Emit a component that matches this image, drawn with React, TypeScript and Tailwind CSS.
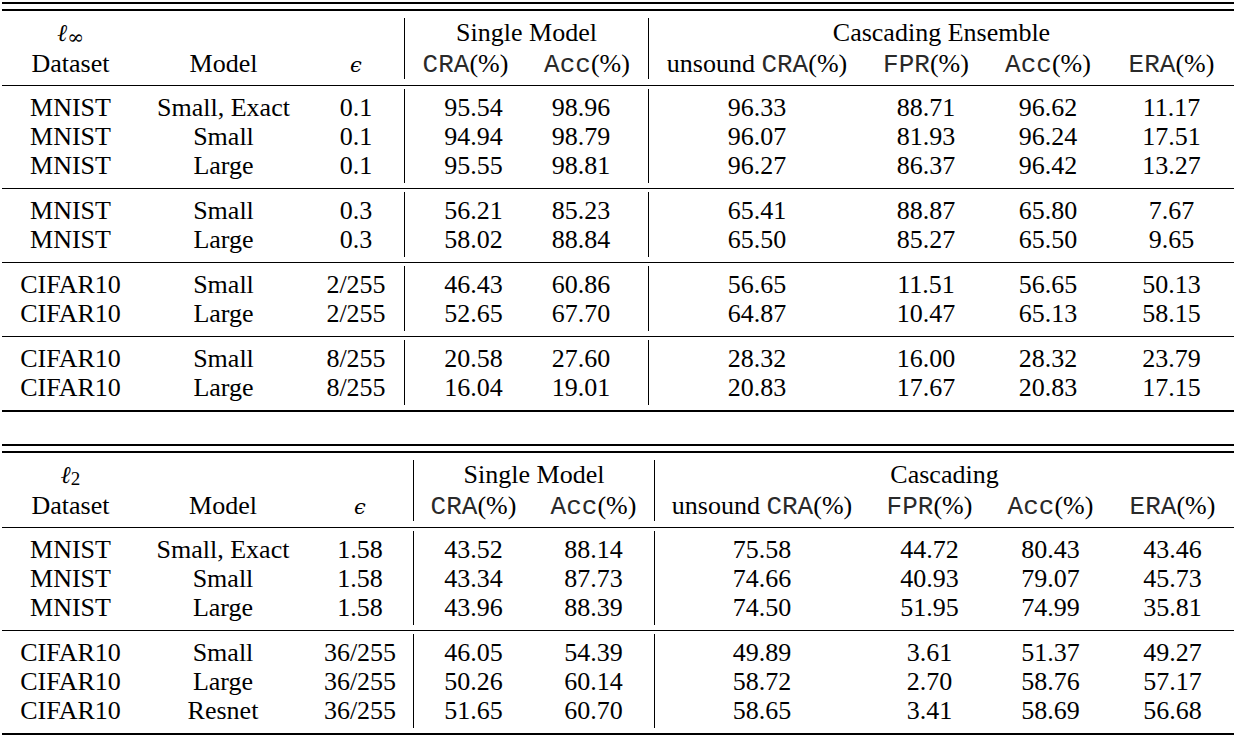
import React from 'react'

const mono = "font-['Liberation_Mono','Courier_New',monospace] text-[#2a2a2a]"

type Row = string[]

const topGroups: Row[][] = [
  [
    ['MNIST', 'Small, Exact', '0.1', '95.54', '98.96', '96.33', '88.71', '96.62', '11.17'],
    ['MNIST', 'Small', '0.1', '94.94', '98.79', '96.07', '81.93', '96.24', '17.51'],
    ['MNIST', 'Large', '0.1', '95.55', '98.81', '96.27', '86.37', '96.42', '13.27'],
  ],
  [
    ['MNIST', 'Small', '0.3', '56.21', '85.23', '65.41', '88.87', '65.80', '7.67'],
    ['MNIST', 'Large', '0.3', '58.02', '88.84', '65.50', '85.27', '65.50', '9.65'],
  ],
  [
    ['CIFAR10', 'Small', '2/255', '46.43', '60.86', '56.65', '11.51', '56.65', '50.13'],
    ['CIFAR10', 'Large', '2/255', '52.65', '67.70', '64.87', '10.47', '65.13', '58.15'],
  ],
  [
    ['CIFAR10', 'Small', '8/255', '20.58', '27.60', '28.32', '16.00', '28.32', '23.79'],
    ['CIFAR10', 'Large', '8/255', '16.04', '19.01', '20.83', '17.67', '20.83', '17.15'],
  ],
]

const bottomGroups: Row[][] = [
  [
    ['MNIST', 'Small, Exact', '1.58', '43.52', '88.14', '75.58', '44.72', '80.43', '43.46'],
    ['MNIST', 'Small', '1.58', '43.34', '87.73', '74.66', '40.93', '79.07', '45.73'],
    ['MNIST', 'Large', '1.58', '43.96', '88.39', '74.50', '51.95', '74.99', '35.81'],
  ],
  [
    ['CIFAR10', 'Small', '36/255', '46.05', '54.39', '49.89', '3.61', '51.37', '49.27'],
    ['CIFAR10', 'Large', '36/255', '50.26', '60.14', '58.72', '2.70', '58.76', '57.17'],
    ['CIFAR10', 'Resnet', '36/255', '51.65', '60.70', '58.65', '3.41', '58.69', '56.68'],
  ],
]

const Pct = ({ name }: { name: string }) => (
  <>
    <span className={mono}>{name}</span>(%)
  </>
)

type TableProps = {
  cols: string
  norm: React.ReactNode
  cascade: string
  groups: Row[][]
  // extra classes for the data cells of each column (number alignment)
  cellPad?: string[]
}

const ResultTable = ({ cols, norm, cascade, groups, cellPad = [] }: TableProps) => (
  <div>
    {/* double top rule */}
    <div className="h-[2px] bg-black" />
    <div className="h-[5px]" />
    <div className="h-[2px] bg-black" />

    {/* header */}
    <div className={`grid ${cols} grid-rows-[31px_30px] pt-[7px] pb-[6px] text-center`}>
      <div className="pt-[2px] leading-none">{norm}</div>
      <div />
      <div />
      <div className="col-span-2 border-l border-black">Single Model</div>
      <div className="col-span-4 border-l border-black">{cascade}</div>

      <div>Dataset</div>
      <div>Model</div>
      <div>
        <span className="italic font-['DejaVu_Serif',serif] text-[21px]">ϵ</span>
      </div>
      <div className="border-l border-black">
        <Pct name="CRA" />
      </div>
      <div>
        <Pct name="Acc" />
      </div>
      <div className="border-l border-black">
        unsound <Pct name="CRA" />
      </div>
      <div>
        <Pct name="FPR" />
      </div>
      <div>
        <Pct name="Acc" />
      </div>
      <div>
        <Pct name="ERA" />
      </div>
    </div>

    {groups.map((rows, g) => (
      <div key={g}>
        <div className="h-px bg-black" />
        <div className={`grid ${cols} pt-[3px] pb-[5px]`}>
          {Array.from({ length: 9 }).map((_, c) => (
            <div
              key={c}
              className={`flex flex-col items-center pt-[4px] pb-[3px] ${
                c === 3 || c === 5 ? 'border-l border-black' : ''
              } ${cellPad[c] ?? ''}`}
            >
              {rows.map((r, i) => (
                <span key={i} className="h-[29px]">
                  {r[c]}
                </span>
              ))}
            </div>
          ))}
        </div>
      </div>
    ))}

    {/* bottom rule */}
    <div className="h-[2px] bg-black" />
  </div>
)

export default function App() {
  return (
    <div className="w-[1239px] h-[738px] bg-white text-black pl-[2px] pr-[5px] pt-[2px] font-['Liberation_Serif','DejaVu_Serif',serif] text-[26px] leading-[29px]">
      <ResultTable
        cols="grid-cols-[137px_169px_96px_122px_122px_217px_122px_122px_125px]"
        norm={
          <span className="inline-flex items-start font-['DejaVu_Serif',serif] italic text-[24px] leading-none">
            ℓ
            <span className="not-italic text-[20px] leading-none mt-[6px]">∞</span>
          </span>
        }
        cascade="Cascading Ensemble"
        groups={topGroups}
        cellPad={['', '', '', 'pl-[16px]', 'pr-[12px]', '', '', '', '']}
      />
      <div className="h-[32px]" />
      <ResultTable
        cols="grid-cols-[137px_168px_106px_120px_121px_215px_121px_121px_123px]"
        norm={
          <span className="inline-flex items-start font-['DejaVu_Serif',serif] italic text-[24px] leading-none">
            ℓ
            <span className="not-italic text-[19px] leading-none mt-[6px] font-['Liberation_Serif',serif]">
              2
            </span>
          </span>
        }
        cascade="Cascading"
        groups={bottomGroups}
      />
    </div>
  )
}
